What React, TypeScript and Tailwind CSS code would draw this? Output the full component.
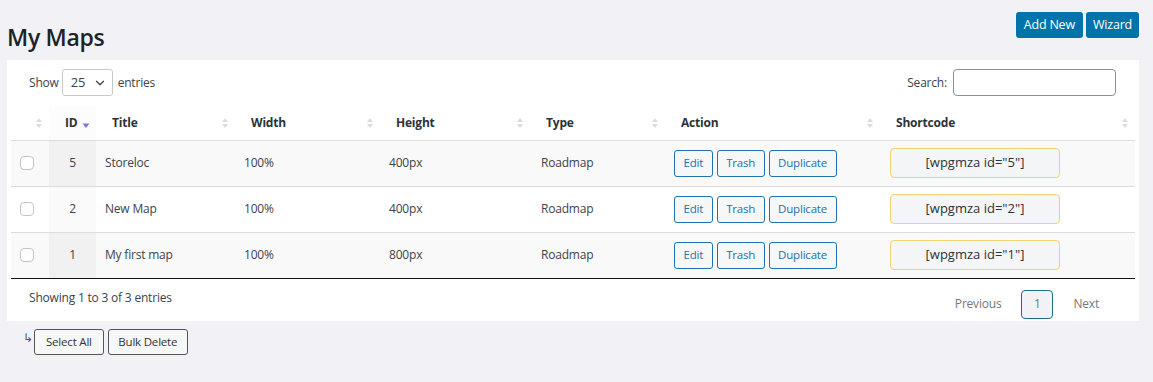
import { ChevronDown } from 'lucide-react';

type MapRow = { id: number; title: string; width: string; height: string; type: string };

const rows: MapRow[] = [
  { id: 5, title: 'Storeloc', width: '100%', height: '400px', type: 'Roadmap' },
  { id: 2, title: 'New Map', width: '100%', height: '400px', type: 'Roadmap' },
  { id: 1, title: 'My first map', width: '100%', height: '800px', type: 'Roadmap' },
];

function SortIcon({ active }: { active?: boolean }) {
  if (active) {
    return (
      <svg width="8" height="12" viewBox="0 0 8 12" className="shrink-0">
        <path d="M0.5 6.5h7l-3.5 4.5z" fill="#7f74d8" />
      </svg>
    );
  }
  return (
    <svg width="8" height="12" viewBox="0 0 8 12" className="shrink-0">
      <path d="M1 5h6L4 1z" fill="#dcdcdc" />
      <path d="M1 7h6l-3 4z" fill="#dcdcdc" />
    </svg>
  );
}

function HeadCell({
  label,
  width,
  shaded,
  active,
}: {
  label?: string;
  width: string;
  shaded?: boolean;
  active?: boolean;
}) {
  return (
    <th className={`${width} h-[34px] p-0 text-left align-middle ${shaded ? 'bg-[#fcfcfc]' : ''}`}>
      <div className="flex items-center justify-between pr-[6px] pl-4">
        <span className="text-[12px] font-bold tracking-[-0.2px] text-[#2c3338]">{label}</span>
        <SortIcon active={active} />
      </div>
    </th>
  );
}

function ActionButton({ children }: { children: string }) {
  return (
    <button
      type="button"
      className="h-[27px] rounded-[3px] border border-[#2271b1] bg-[#f6f7f7] px-[8.5px] text-[11.5px] text-[#2271b1]"
    >
      {children}
    </button>
  );
}

export default function App() {
  return (
    <div
      className="min-h-[382px] w-full bg-[#f2f2f6] pr-[14px] pl-[7px] text-[12px] tracking-[-0.2px] text-[#3c434a]"
      style={{ fontFamily: '"Open Sans", "Noto Sans", sans-serif' }}
    >
      <div className="flex items-start justify-between pt-3">
        <h1 className="pt-[10px] text-[23px] leading-[30px] font-semibold tracking-[-0.3px] text-[#1d2327]">
          My Maps
        </h1>
        <div className="flex gap-[3px]">
          <button
            type="button"
            className="h-[26px] rounded-[3px] bg-[#0073aa] px-[8px] text-[12.5px] text-white"
          >
            Add New
          </button>
          <button
            type="button"
            className="h-[26px] rounded-[3px] bg-[#0073aa] px-[7px] text-[12.5px] text-white"
          >
            Wizard
          </button>
        </div>
      </div>

      <div className="mt-[8px] bg-white px-1 pt-[9px] pb-[2px]">
        <div className="flex items-center justify-between pr-[19px] pl-[18px]">
          <div className="flex items-center gap-[3px] text-[#3c434a]">
            <span>Show</span>
            <div className="flex h-[27px] w-[51px] items-center justify-between rounded-[3px] border border-[#c8c8c8] pr-[5px] pl-[8px]">
              <span className="text-[13px]">25</span>
              <ChevronDown size={14} strokeWidth={2.2} className="text-[#3c434a]" />
            </div>
            <span className="pl-[2px]">entries</span>
          </div>
          <div className="flex items-center gap-[6px]">
            <span>Search:</span>
            <div className="h-[27px] w-[163px] rounded-[4px] border border-[#8c8f94]" />
          </div>
        </div>

        <table className="mt-[10px] w-[1124px] table-fixed border-collapse">
          <thead>
            <tr className="border-b border-[#dcdcde]">
              <HeadCell width="w-[38px]" />
              <HeadCell width="w-[47px]" label="ID" shaded active />
              <HeadCell width="w-[139px]" label="Title" />
              <HeadCell width="w-[145px]" label="Width" />
              <HeadCell width="w-[150px]" label="Height" />
              <HeadCell width="w-[135px]" label="Type" />
              <HeadCell width="w-[215px]" label="Action" />
              <HeadCell width="w-[255px]" label="Shortcode" />
            </tr>
          </thead>
          <tbody className="text-[12px] text-[#3c434a]">
            {rows.map((r, i) => {
              const odd = i % 2 === 0;
              const last = i === rows.length - 1;
              return (
                <tr
                  key={r.id}
                  className={`h-[46px] ${odd ? 'bg-[#f9f9f9]' : 'bg-white'} ${last ? 'border-b border-[#111]' : 'border-b border-[#dcdcde]'}`}
                >
                  <td className="pl-[9px]">
                    <div className="size-[14px] rounded-[4px] border border-[#c3c4c7] bg-white" />
                  </td>
                  <td className={`text-center ${odd ? 'bg-[#f1f1f1]' : 'bg-[#fafafa]'}`}>{r.id}</td>
                  <td className="pl-[9px]">{r.title}</td>
                  <td className="pl-[9px]">{r.width}</td>
                  <td className="pl-[9px]">{r.height}</td>
                  <td className="pl-[11px]">{r.type}</td>
                  <td className="pl-[9px]">
                    <div className="flex gap-[4px]">
                      <ActionButton>Edit</ActionButton>
                      <ActionButton>Trash</ActionButton>
                      <ActionButton>Duplicate</ActionButton>
                    </div>
                  </td>
                  <td className="pl-[10px]">
                    <div className="flex h-[30px] w-[170px] items-center justify-center rounded-[4px] border border-[#f2d271] bg-[#f3f5f7] text-[13px] tracking-normal text-[#2c3338]">
                      [wpgmza id="{r.id}"]
                    </div>
                  </td>
                </tr>
              );
            })}
          </tbody>
        </table>

        <div className="flex items-start justify-between pt-[11px] pr-[36px] pl-[18px]">
          <span className="leading-[16px] text-[#3c434a]">Showing 1 to 3 of 3 entries</span>
          <div className="flex items-center text-[#777]">
            <span className="px-[20px]">Previous</span>
            <span className="flex h-[29px] w-[32px] items-center justify-center rounded-[4px] border border-[#1f6c8a] bg-[#f0f2f5] text-[#777]">
              1
            </span>
            <span className="pl-[20px]">Next</span>
          </div>
        </div>
      </div>

      <div className="mt-[8px] flex items-start pl-[16px]">
        <span className="w-[11px] pt-[3px] text-[12px] leading-none text-[#555]">↳</span>
        <div className="flex gap-[4px]">
          <button
            type="button"
            className="h-[26px] rounded-[3px] border border-[#555] bg-[#f6f7f7] px-[11px] text-[11.5px] text-[#333]"
          >
            Select All
          </button>
          <button
            type="button"
            className="h-[26px] rounded-[3px] border border-[#555] bg-[#f6f7f7] px-[9.5px] text-[11.5px] text-[#333]"
          >
            Bulk Delete
          </button>
        </div>
      </div>
    </div>
  );
}
